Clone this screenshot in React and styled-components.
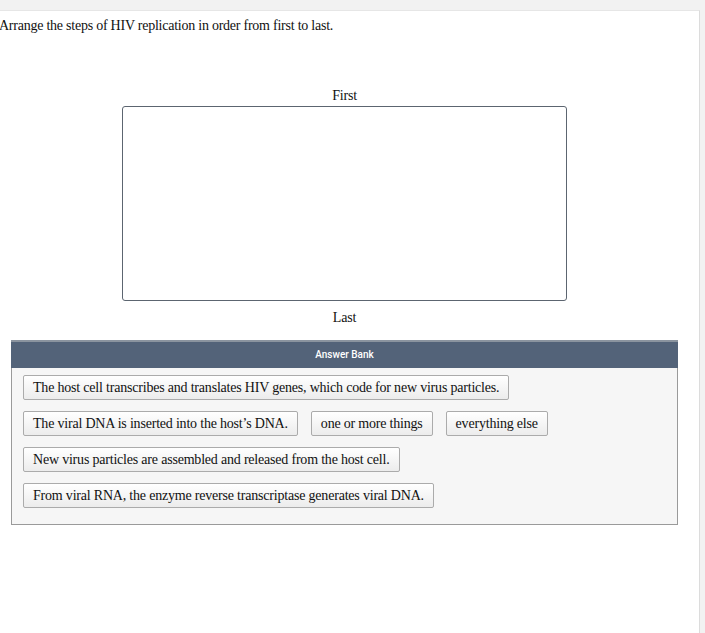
import React from 'react';
import styled, { createGlobalStyle } from 'styled-components';

const GlobalStyle = createGlobalStyle`
    html, body {
        margin: 0;
        padding: 0;
        background-color: #f2f2f2;
    }
`;

const Page = styled.div`
    width: 705px;
    height: 633px;
    padding-top: 10px;
    box-sizing: border-box;
    overflow: hidden;
`;

const Card = styled.div`
    width: 700px;
    height: 623px;
    background-color: #fff;
    border-top: 1px solid #e6e6e6;
    border-right: 1px solid #dcdcdc;
    box-sizing: border-box;
    font-family: "Liberation Serif", "Times New Roman", serif;
    color: #111;
`;

const Content = styled.div`
    width: 689px;
    display: flex;
    flex-direction: column;
`;

const Prompt = styled.p`
    margin: 0 0 0 -1px;
    padding-top: 7px;
    font-size: 14px;
    line-height: 16px;
    letter-spacing: -0.24px;
`;

const SequenceArea = styled.div`
    display: flex;
    flex-direction: column;
    align-items: center;
    margin-top: 54px;
`;

const EndLabel = styled.div`
    font-size: 14px;
    line-height: 16px;
    letter-spacing: -0.2px;
    margin: ${({ position }) => position === 'top' ? '0 0 2px' : '9px 0 0'};
`;

const DropZone = styled.div`
    width: 445px;
    height: 195px;
    border: 1px solid #5c6570;
    border-radius: 3px;
    box-sizing: border-box;
`;

const AnswerBank = styled.div`
    margin: 14px 0 0 11px;
    width: 667px;
    border: 1px solid #9a9a9a;
    border-top: none;
    box-sizing: border-box;
    background-color: #f6f6f6;
`;

const BankHeader = styled.div`
    height: 28px;
    margin: 0 -1px;
    padding-bottom: 1px;
    border-top: 2px solid #8b949f;
    background-color: #536379;
    color: #fff;
    font-family: "Roboto", "Liberation Sans", sans-serif;
    font-size: 10px;
    font-weight: 500;
    display: flex;
    align-items: center;
    justify-content: center;
    box-sizing: border-box;
`;

const BankBody = styled.div`
    padding: 7px 11px 16px;
    display: flex;
    flex-direction: column;
    gap: 11px;
`;

const ChipRow = styled.div`
    display: flex;
    gap: 13px;
`;

const Chip = styled.div`
    height: 25px;
    padding: 0 9px;
    display: flex;
    align-items: center;
    box-sizing: border-box;
    border: 1px solid #ababab;
    border-radius: 2px;
    background: linear-gradient(#ffffff, #ececec);
    font-size: 14px;
    letter-spacing: -0.2px;
    white-space: nowrap;
`;

const rows = [
    ['The host cell transcribes and translates HIV genes, which code for new virus particles.'],
    ['The viral DNA is inserted into the host\u2019s DNA.', 'one or more things', 'everything else'],
    ['New virus particles are assembled and released from the host cell.'],
    ['From viral RNA, the enzyme reverse transcriptase generates viral DNA.'],
];

export default function App() {
    return (
        <Page>
            <GlobalStyle />
            <Card>
                <Content>
                    <Prompt>Arrange the steps of HIV replication in order from first to last.</Prompt>
                    <SequenceArea>
                        <EndLabel position="top">First</EndLabel>
                        <DropZone />
                        <EndLabel position="bottom">Last</EndLabel>
                    </SequenceArea>
                    <AnswerBank>
                        <BankHeader>Answer Bank</BankHeader>
                        <BankBody>
                            {rows.map((row, i) => (
                                <ChipRow key={i}>
                                    {row.map(text => <Chip key={text}>{text}</Chip>)}
                                </ChipRow>
                            ))}
                        </BankBody>
                    </AnswerBank>
                </Content>
            </Card>
        </Page>
    );
}
